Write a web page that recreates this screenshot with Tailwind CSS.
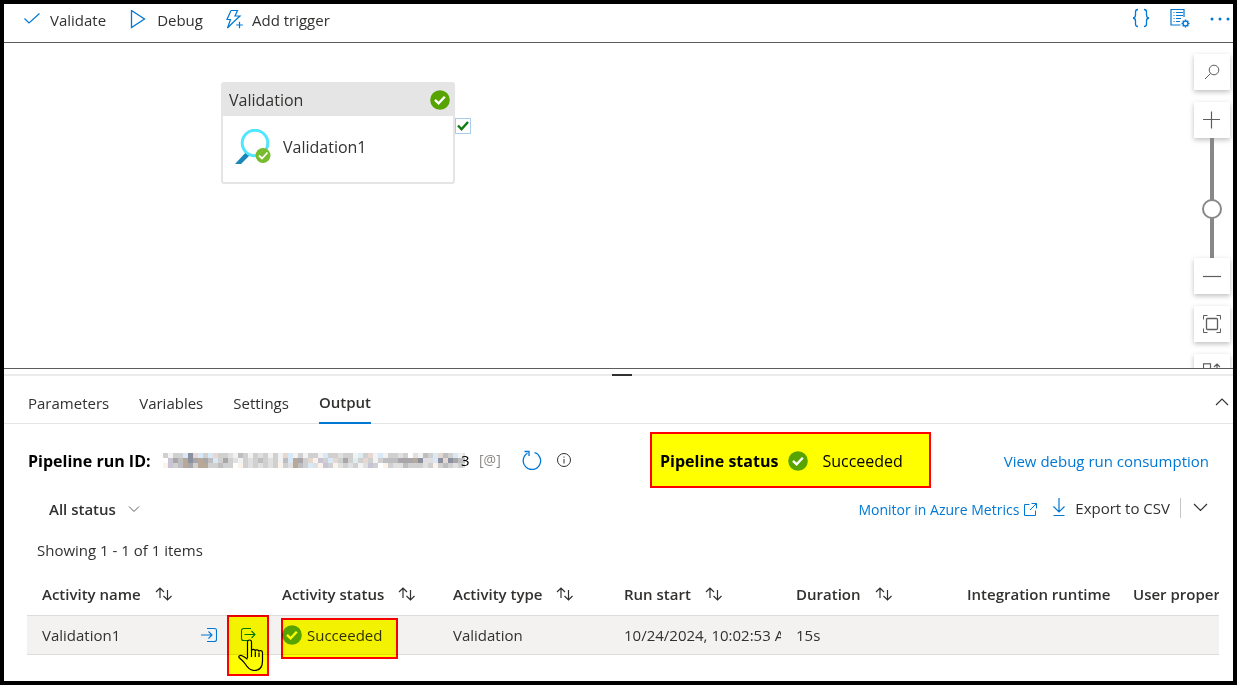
<!DOCTYPE html>
<html lang="en">
<head>
  <meta charset="UTF-8">
  <meta name="viewport" content="width=device-width, initial-scale=1.0">
  <title>Pipeline - Validation</title>
  <script src="https://cdn.jsdelivr.net/npm/@tailwindcss/browser@4"></script>
</head>
<body class="min-h-screen flex flex-col border-4 border-black bg-white font-['Open_Sans',sans-serif] text-[15px] leading-5 text-[#323130] overflow-x-hidden">

  <!-- Shared icons -->
  <svg class="hidden">
    <symbol id="ok" viewBox="0 0 20 20"><circle cx="10" cy="10" r="9.8" fill="#57a300"/><path d="M5 9.8l3.6 3.6 6.2-6.6" fill="none" stroke="#fff" stroke-width="2.4"/></symbol>
    <symbol id="sort" viewBox="0 0 18 14"><path d="M5 11V1M1 5l4-4 4 4M12.500 3v10M8.500 9l4 4 4-4" fill="none" stroke="#323130" stroke-width="1.2"/></symbol>
  </svg>

  <!-- Toolbar -->
  <header class="flex items-center justify-between h-[39px] pb-1.5 pl-5 pr-[3px] border-b border-[#5c5c5c]">
    <div class="flex items-center gap-[23px]">
      <button class="flex items-center gap-2.5">
        <svg class="w-4 h-4" viewBox="0 0 16 16" fill="none" stroke="#0078d4" stroke-width="1.2"><path d="M0.500 6.500l4.500 4.500L15.500 1.500"/></svg>
        Validate
      </button>
      <button class="flex items-center gap-2.5">
        <svg class="w-[18px] h-5" viewBox="0 0 18 20" fill="none" stroke="#0078d4" stroke-width="1.300"><path d="M2.500 0.500v17L15.500 9z"/></svg>
        Debug
      </button>
      <button class="flex items-center gap-2">
        <svg class="w-[18px] h-5" viewBox="0 0 18 20" fill="none" stroke="#0078d4" stroke-width="1.2"><path d="M5 0.500h6.500L9 6h5L7.500 12M5 0.500L1 9.500h3.500L1.500 18 7.500 12M13.500 11.700v6.600M10.200 15h6.600"/></svg>
        Add trigger
      </button>
    </div>
    <div class="flex items-center gap-5 pb-1">
      <button aria-label="Code"><svg class="w-[18px] h-5 block" viewBox="0 0 18 20" fill="none" stroke="#0078d4" stroke-width="1.300"><path d="M6 1.500C4 1.500 3.500 2.500 3.500 4v3c0 1.500-.7 2.800-2.500 3 1.800.2 2.500 1.500 2.500 3v3c0 1.500.5 2.500 2.500 2.500M12 1.500c2 0 2.500 1 2.500 2.500v3c0 1.500.7 2.800 2.500 3-1.800.2-2.500 1.500-2.500 3v3c0 1.500-.5 2.500-2.500 2.500"/></svg></button>
      <button aria-label="Properties"><svg class="w-5 h-5 block" viewBox="0 0 20 20" fill="none" stroke="#0078d4" stroke-width="1.2"><path d="M10.500 17H1V1.500h13V9M3.500 4.500h1M6 4.500h7M3.500 7.500h1M6 7.500h7M3.500 10.500h1M6 10.500h5M3.500 13.500h1M6 13.500h4"/><circle cx="15.500" cy="15.500" r="2.400"/><path d="M15.500 11.500v1.600M15.500 17.900v1.600M11.500 15.500h1.600M17.900 15.500h1.600M12.700 12.700l1.100 1.100M17.200 17.200l1.100 1.100M12.700 18.300l1.100-1.100M17.200 13.800l1.100-1.100" stroke-width="1.500"/></svg></button>
      <button aria-label="More"><svg class="w-5 h-5 block" viewBox="0 0 20 20" fill="#0078d4"><circle cx="2" cy="11" r="1.500"/><circle cx="10" cy="11" r="1.500"/><circle cx="18" cy="11" r="1.500"/></svg></button>
    </div>
  </header>

  <!-- Canvas -->
  <main class="relative h-[326px] overflow-hidden border-b border-[#5c5c5c]">
    <section class="absolute left-[217px] top-[39px] w-[234px] h-[102px] border-2 border-[#e5e5e5] rounded-[3px] bg-white text-base leading-5">
      <div class="flex items-center justify-between h-8 pl-1.5 pr-[3px] bg-[#e5e5e5]">
        <span>Validation</span>
        <svg class="w-5 h-5"><use href="#ok"/></svg>
      </div>
      <div class="flex items-center gap-3 h-[62px] pl-3">
        <svg class="w-9 h-9" viewBox="0 0 36 36"><path d="M12 22l4 3-10 10H0z" fill="#1b87b8"/><circle cx="20" cy="14" r="12.800" fill="#fff" stroke="#50e6ff" stroke-width="3"/><circle cx="28" cy="26.500" r="7.500" fill="#76bc2d"/><path d="M24 26.500l3 3 5.500-6" fill="none" stroke="#fff" stroke-width="1.800"/></svg>
        <span>Validation1</span>
      </div>
    </section>
    <svg class="absolute left-[451px] top-[75px] w-4 h-4" viewBox="0 0 16 16"><rect x="0.500" y="0.500" width="15" height="15" fill="#fff" stroke="#a9cdee"/><path d="M3 7.500l3.500 3.700L13 4" fill="none" stroke="#107c10" stroke-width="2.400"/></svg>

    <div class="absolute right-[3px] top-[11px] flex flex-col gap-3">
      <button aria-label="Search canvas" class="w-9 h-9 grid place-items-center bg-white shadow-[0_2px_5px_#00000040]"><svg class="w-4 h-4" viewBox="0 0 16 16" fill="none" stroke="#605e5c"><circle cx="10" cy="6" r="4.800"/><path d="M6.500 9.500L1 15"/></svg></button>
      <div class="flex flex-col items-center">
        <button aria-label="Zoom in" class="w-9 h-9 grid place-items-center bg-white shadow-[0_2px_5px_#00000040]"><svg class="w-[18px] h-[18px]" viewBox="0 0 18 18" fill="none" stroke="#605e5c" stroke-width="1.200"><path d="M8.500 0.500v17M0 8.500h17"/></svg></button>
        <input type="range" aria-label="Zoom" min="0" max="100" value="39" class="appearance-none w-5 h-[120px] [writing-mode:vertical-lr] [direction:rtl] bg-transparent [&::-webkit-slider-runnable-track]:w-1 [&::-webkit-slider-runnable-track]:h-full [&::-webkit-slider-runnable-track]:bg-[#8a8886] [&::-webkit-slider-thumb]:appearance-none [&::-webkit-slider-thumb]:w-5 [&::-webkit-slider-thumb]:h-5 [&::-webkit-slider-thumb]:-ml-2 [&::-webkit-slider-thumb]:rounded-full [&::-webkit-slider-thumb]:border-2 [&::-webkit-slider-thumb]:border-[#8a8886] [&::-webkit-slider-thumb]:bg-white">
        <button aria-label="Zoom out" class="w-9 h-9 grid place-items-center bg-white shadow-[0_2px_5px_#00000040]"><svg class="w-[18px] h-[18px]" viewBox="0 0 18 18" stroke="#605e5c" stroke-width="1.200"><path d="M0 9.500h18"/></svg></button>
      </div>
      <button aria-label="Zoom to fit" class="w-9 h-9 grid place-items-center bg-white shadow-[0_2px_5px_#00000040]"><svg class="w-[18px] h-[18px]" viewBox="0 0 18 18" fill="none" stroke="#605e5c"><path d="M0.500 4.500v-4h4M13.500 0.500h4v4M17.500 13.500v4h-4M4.500 17.500h-4v-4"/><rect x="3.500" y="3.500" width="11" height="11" rx="1" stroke-width="1.300"/></svg></button>
      <button aria-label="Auto align" class="w-9 h-9 grid place-items-center bg-white shadow-[0_2px_5px_#00000040]"><svg class="w-[18px] h-[18px]" viewBox="0 0 18 18" fill="none" stroke="#605e5c" stroke-width="1.200"><rect x="0.500" y="0.800" width="7" height="7"/><rect x="0.500" y="11" width="7" height="7"/><path d="M14 17V1M11 4l3-3 3 3"/></svg></button>
    </div>
  </main>

  <!-- Splitter -->
  <div class="flex flex-col items-center h-[7px] pl-1.5 border-b-2 border-[#ebebeb] relative">
    <span class="absolute top-[5px] w-5 h-0.5 bg-[#323130]"></span>
  </div>

  <!-- Tabs -->
  <nav class="flex items-center justify-between h-12 pl-6 pr-1 border-b border-[#e5e5e5]">
    <div class="flex gap-[30px] self-stretch">
      <button class="pt-1.5">Parameters</button>
      <button class="pt-1.5">Variables</button>
      <button class="pt-1.5">Settings</button>
      <button class="pt-1.5 -mb-px border-b-2 border-[#0078d4] font-semibold">Output</button>
    </div>
    <button aria-label="Collapse" class="pt-1"><svg class="w-3.5 h-3.5" viewBox="0 0 14 14" fill="none" stroke="#323130" stroke-width="1.100"><path d="M1 10l6-6 6 6"/></svg></button>
  </nav>

  <!-- Run details -->
  <section class="flex items-center h-14 mt-2 pl-6 pr-6 text-black">
    <span class="w-[135px] pt-0.5 text-base leading-5 font-bold whitespace-nowrap">Pipeline run ID:</span>
    <svg id="run-id" class="w-[302px] h-[15px]" viewBox="0 0 302 15" shape-rendering="crispEdges"></svg>
    <span class="-ml-1 w-2">3</span>
    <button aria-label="Copy run ID" class="ml-2.5 w-5 text-sm text-[#8a8886]">[@]</button>
    <button aria-label="Refresh" class="ml-[23px]"><svg class="w-5 h-5 block" viewBox="0 0 20 20" fill="none" stroke="#0078d4" stroke-width="1.300"><path d="M12.500 2.500A8.700 8.700 0 1 1 5.500 3.300M2.500 1.500H7V6"/></svg></button>
    <button aria-label="Info" class="ml-[15px]"><svg class="w-3.5 h-3.5 block" viewBox="0 0 14 14" fill="none" stroke="#323130"><circle cx="7" cy="7" r="6.500"/><path d="M7 6v4.500M7 3.500v1.200"/></svg></button>
    <div class="flex items-center ml-[79px] w-[281px] h-14 pl-2 pt-0.5 border-2 border-[#f00] bg-[#ff0] text-base leading-5">
      <span class="font-bold whitespace-nowrap">Pipeline status</span>
      <svg class="w-5 h-5 ml-2.5 mr-3.5"><use href="#ok"/></svg>
      <span>Succeeded</span>
    </div>
    <a href="#" class="ml-auto pt-0.5 text-[#0078d4] whitespace-nowrap">View debug run consumption</a>
  </section>

  <section class="flex items-center justify-between h-10 pl-[45px] pr-6">
    <button class="flex items-center gap-3 pt-0.5 font-semibold">
      All status
      <svg class="w-3 h-3" viewBox="0 0 12 12" fill="none" stroke="#605e5c"><path d="M1 3.500l5 5 5-5"/></svg>
    </button>
    <div class="flex items-center">
      <a href="#" class="flex items-center gap-1 pt-1 text-sm leading-5 text-[#0078d4]">
        Monitor in Azure Metrics
        <svg class="w-3.5 h-3.5" viewBox="0 0 14 14" fill="none" stroke="#0078d4"><path d="M6.500 1.500h-5v11h11v-5M8.500 0.500h5v5M13.500 0.500L7 7"/></svg>
      </a>
      <button class="flex items-center gap-2 ml-3.5">
        <svg class="w-4 h-5" viewBox="0 0 16 20" fill="none" stroke="#0078d4" stroke-width="1.200"><path d="M8 0v14M2.500 8.500L8 14l5.500-5.500M2.500 17.500h11"/></svg>
        Export to CSV
      </button>
      <span class="w-px h-5 ml-2.5 mr-3 bg-[#c8c6c4]"></span>
      <button aria-label="More export options"><svg class="w-4 h-4 block" viewBox="0 0 16 16" fill="none" stroke="#323130" stroke-width="1.200"><path d="M1 4l6.500 6.500L14 4"/></svg></button>
    </div>
  </section>

  <p class="pl-[33px] mt-3">Showing 1 - 1 of 1 items</p>

  <!-- Activity runs -->
  <div class="ml-[23px] mr-3.5 mt-3.5 pb-6 overflow-hidden">
    <table class="table-fixed w-[1265px] text-left whitespace-nowrap">
      <colgroup>
        <col class="w-[240px]"><col class="w-[171px]"><col class="w-[171px]"><col class="w-[172px]"><col class="w-[171px]"><col class="w-[169px]"><col class="w-[171px]">
      </colgroup>
      <thead>
        <tr class="h-[41px] border-b border-[#dddddd]">
          <th class="pl-[15px] font-semibold"><button class="flex items-center gap-3.5">Activity name <svg class="w-[18px] h-3.5"><use href="#sort"/></svg></button></th>
          <th class="pl-[15px] font-semibold"><button class="flex items-center gap-3.5">Activity status <svg class="w-[18px] h-3.5"><use href="#sort"/></svg></button></th>
          <th class="pl-[15px] font-semibold"><button class="flex items-center gap-3.5">Activity type <svg class="w-[18px] h-3.5"><use href="#sort"/></svg></button></th>
          <th class="pl-[15px] font-semibold"><button class="flex items-center gap-3.5">Run start <svg class="w-[18px] h-3.5"><use href="#sort"/></svg></button></th>
          <th class="pl-[15px] font-semibold"><button class="flex items-center gap-3.5">Duration <svg class="w-[18px] h-3.5"><use href="#sort"/></svg></button></th>
          <th class="pl-[15px] font-semibold">Integration runtime</th>
          <th class="pl-3 font-semibold">User properties</th>
        </tr>
      </thead>
      <tbody>
        <tr class="h-[39px] border-b border-[#dddddd] bg-[#f3f2f1]">
          <td class="pl-[15px]">
            <div class="relative flex items-center">
              <span class="w-[159px]">Validation1</span>
              <button aria-label="Input"><svg class="w-4 h-4 block" viewBox="0 0 16 16" fill="none" stroke="#0078d4" stroke-width="1.100"><path d="M6 1.500h7.500a2 2 0 0 1 2 2v9a2 2 0 0 1-2 2H6M0 8h11M7.500 4.500L11 8l-3.500 3.500"/></svg></button>
              <button aria-label="Output" class="ml-[23px]"><svg class="w-4 h-4 block" viewBox="0 0 16 16" fill="none" stroke="#0078d4" stroke-width="1.100"><path d="M11 1.500H3.500a2 2 0 0 0-2 2v8a2 2 0 0 0 2 2H11M4.500 7.500H15M11.500 4l3.500 3.500-3.500 3.500"/></svg></button>
              <span class="absolute left-[185px] -top-2.5 w-[42px] h-[61px] border-2 border-[#f00] bg-[#ff0] mix-blend-multiply"></span>
              <svg class="absolute left-[196px] top-3.5 w-[26px] h-8" viewBox="0 0 26 32"><path d="M9.500 19V3a2 2 0 0 1 4 0v9c0-2.400 3.800-2.200 3.800.3 0-2.200 3.700-2 3.700.5 0-2 3.500-1.600 3.500.8V22c0 6-3 9.500-8 9.500-4.500 0-7-2.800-9.200-6.500C5.500 22 3 20.500 1 18.500c-.8-1.500 1-2.600 3-1.800 2 .8 3.800 2 5.500 3.500" fill="#ff0" stroke="#000" stroke-width="1.200"/><path d="M13.500 11.500V18M17.300 12.500V18M21 13.500V18" stroke="#000" stroke-width="1.200"/></svg>
            </div>
          </td>
          <td class="pl-[15px]">
            <div class="relative flex items-center gap-[5px]">
              <svg class="w-5 h-5"><use href="#ok"/></svg>
              <span>Succeeded</span>
              <span class="absolute -left-px -top-[7px] w-[117px] h-[41px] border-2 border-[#f00] bg-[#ff0] mix-blend-multiply"></span>
            </div>
          </td>
          <td class="pl-[15px]">Validation</td>
          <td class="pl-[15px]"><div class="overflow-hidden">10/24/2024, 10:02:53 AM</div></td>
          <td class="pl-[15px]">15s</td>
          <td></td>
          <td></td>
        </tr>
      </tbody>
    </table>
  </div>

  <script>
    // Redacted part of the run ID, one letter per 5px block
    const colors = {
      a: '#ffffff', b: '#f2f2f2', c: '#e0e0e0', d: '#d0d0d0', e: '#bebec0', f: '#a8a6a8',
      g: '#8a90a0', h: '#d8e8f6', i: '#e6d8d0', j: '#b8a898', k: '#fbf3ea', l: '#c8c4d4', m: '#ddeef0'
    };
    const rows = [
      'dbddhgihdhiddcbedbdcdbdbihbdbddbhddcddbmdibhbddcdacbedhiedhbcdddd',
      'alfejgfjfehdfdcbdcdedcdbehjfdikldhidfdmdidbdeeefffjgcchgigfeedfdc',
      'kldejfdjjddeddakdcdcdcdkdcjedhckldkcdcdbcldakdccedddcdkdedcdcdkcd'
    ];
    let rects = '';
    rows.forEach((row, y) => {
      for (let x = 0; x < 61; x++) {
        rects += `<rect x="${x * 5}" y="${y * 5}" width="5" height="5" fill="${colors[row[x]]}"/>`;
      }
    });
    document.getElementById('run-id').innerHTML = rects;
  </script>
</body>
</html>
